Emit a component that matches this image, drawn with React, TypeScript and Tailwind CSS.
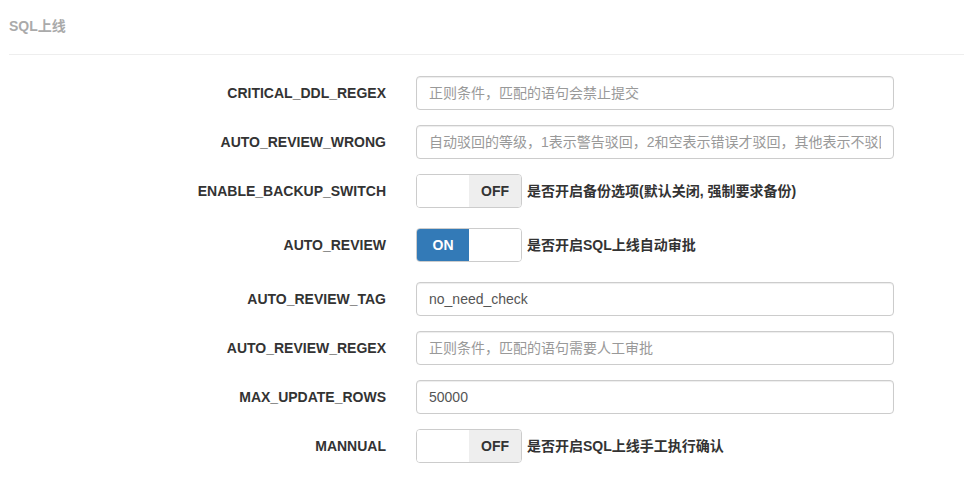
const FONT = '"Liberation Sans", Arial, "Noto Sans CJK SC", sans-serif'

type Row =
  | { kind: 'input'; label: string; value?: string; placeholder?: string }
  | { kind: 'switch'; label: string; on: boolean; help: string }

const ROWS: Row[] = [
  { kind: 'input', label: 'CRITICAL_DDL_REGEX', placeholder: '正则条件，匹配的语句会禁止提交' },
  {
    kind: 'input',
    label: 'AUTO_REVIEW_WRONG',
    placeholder: '自动驳回的等级，1表示警告驳回，2和空表示错误才驳回，其他表示不驳回',
  },
  { kind: 'switch', label: 'ENABLE_BACKUP_SWITCH', on: false, help: '是否开启备份选项(默认关闭, 强制要求备份)' },
  { kind: 'switch', label: 'AUTO_REVIEW', on: true, help: '是否开启SQL上线自动审批' },
  { kind: 'input', label: 'AUTO_REVIEW_TAG', value: 'no_need_check' },
  { kind: 'input', label: 'AUTO_REVIEW_REGEX', placeholder: '正则条件，匹配的语句需要人工审批' },
  { kind: 'input', label: 'MAX_UPDATE_ROWS', value: '50000' },
  { kind: 'switch', label: 'MANNUAL', on: false, help: '是否开启SQL上线手工执行确认' },
]

function Toggle({ on }: { on: boolean }) {
  return (
    <div className="flex h-[34px] w-[106px] shrink-0 overflow-hidden rounded-[4px] border border-[#ccc] text-[14px] font-bold">
      {on ? (
        <>
          <span className="flex w-[52px] items-center justify-center bg-[#337ab7] text-white">ON</span>
          <span className="w-[52px] bg-white" />
        </>
      ) : (
        <>
          <span className="w-[52px] bg-white" />
          <span className="flex w-[52px] items-center justify-center bg-[#eee] text-[#333]">OFF</span>
        </>
      )}
    </div>
  )
}

export default function App() {
  return (
    <div className="h-[478px] w-full overflow-hidden bg-white text-[#333]" style={{ fontFamily: FONT }}>
      <div className="pl-[9px] pt-[18px]">
        <h4 className="text-[14px] leading-[17px] font-bold text-[#aaa]">SQL上线</h4>
        <hr className="mt-[19px] border-t border-[#eee]" />
      </div>

      <form className="mt-[21px] pl-[9px]">
        {ROWS.map((row) => (
          <div
            key={row.label}
            className={`flex h-[34px] items-center ${row.kind === 'switch' ? 'mb-[20px]' : 'mb-[15px]'}`}
          >
            <label className="w-[377px] shrink-0 text-right text-[14px] font-bold text-[#333]">{row.label}</label>
            <div className="ml-[30px] flex items-center">
              {row.kind === 'input' ? (
                <input
                  readOnly
                  defaultValue={row.value}
                  placeholder={row.placeholder}
                  className="h-[34px] w-[478px] rounded-[4px] border border-[#ccc] bg-white px-[12px] text-[14px] text-[#555] shadow-[inset_0_1px_1px_rgba(0,0,0,0.075)] outline-none placeholder:text-[#999]"
                  style={{ fontFamily: FONT }}
                />
              ) : (
                <>
                  <Toggle on={row.on} />
                  <span className="ml-[5px] text-[14px] font-bold text-[#333]">{row.help}</span>
                </>
              )}
            </div>
          </div>
        ))}
      </form>
    </div>
  )
}
